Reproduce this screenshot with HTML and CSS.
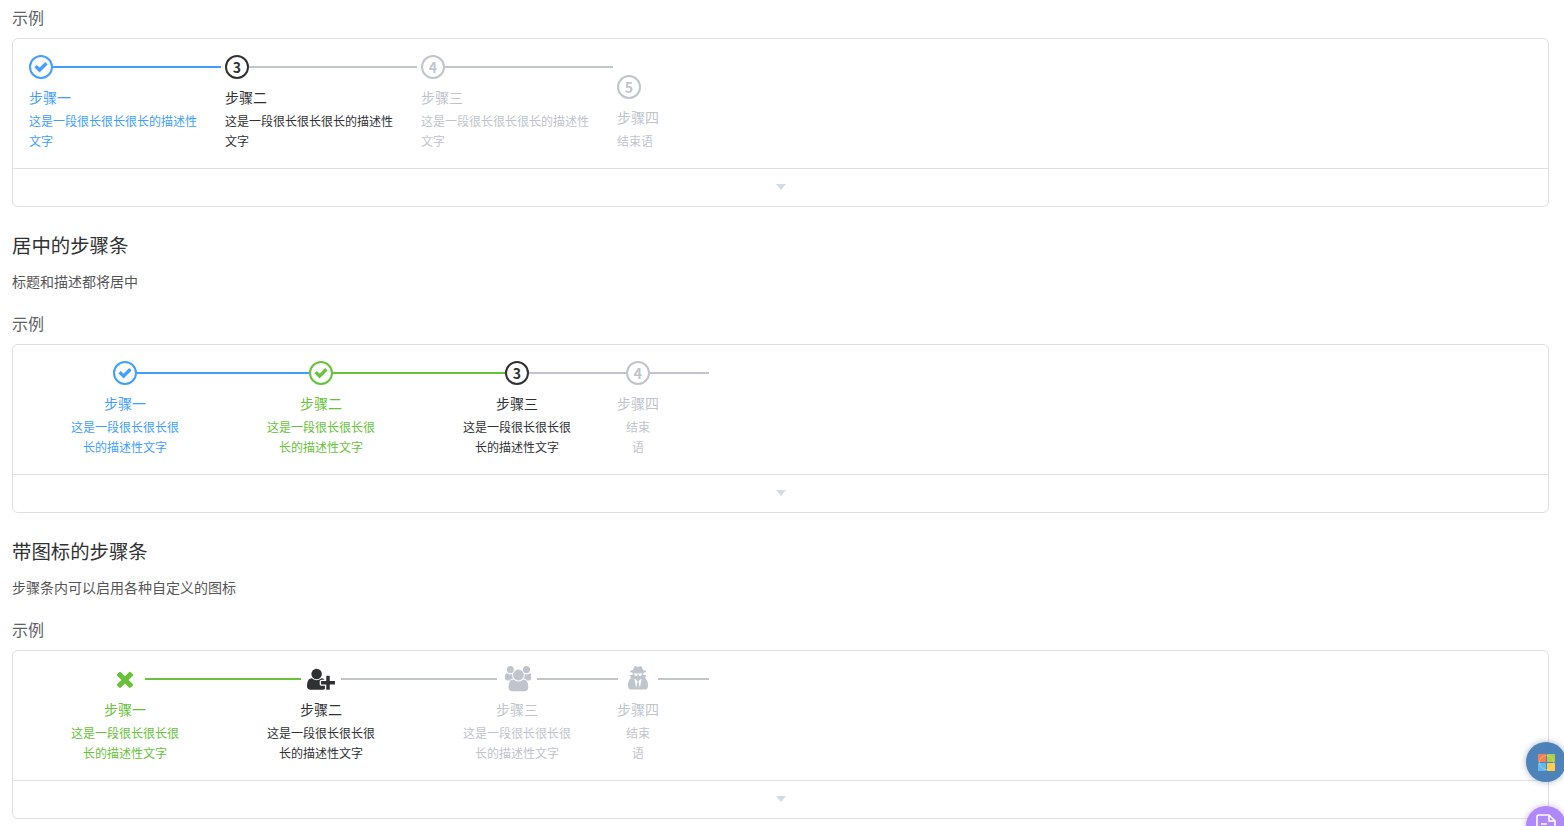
FILE: index.html
```html
<!DOCTYPE html>
<html lang="zh-CN">
<head>
  <meta charset="UTF-8">
  <meta name="viewport" content="width=device-width, initial-scale=1.0">
  <title>Steps 步骤条</title>
  <link rel="stylesheet" href="styles.css">
</head>
<body>
  <svg class="icon-defs" width="0" height="0">
    <symbol id="i-check" viewBox="0 0 1792 1792">
      <path d="M1671 566q0 40-28 68l-724 724-136 136q-28 28-68 28t-68-28l-136-136-362-362q-28-28-28-68t28-68l136-136q28-28 68-28t68 28l294 295 656-657q28-28 68-28t68 28l136 136q28 28 28 68z"/>
    </symbol>
  </svg>

  <h3 class="demo-label demo-label-first">示例</h3>
  <div class="demo-card">
    <div class="demo-body">
      <div class="steps steps-simple">
        <div class="step is-finish">
          <div class="step-head">
            <span class="step-icon"><svg class="check"><use href="#i-check"/></svg></span>
            <span class="step-line"></span>
          </div>
          <div class="step-title">步骤一</div>
          <div class="step-desc">这是一段很长很长很长的描述性文字</div>
        </div>
        <div class="step is-process">
          <div class="step-head">
            <span class="step-icon">3</span>
            <span class="step-line"></span>
          </div>
          <div class="step-title">步骤二</div>
          <div class="step-desc">这是一段很长很长很长的描述性文字</div>
        </div>
        <div class="step is-wait">
          <div class="step-head">
            <span class="step-icon">4</span>
            <span class="step-line"></span>
          </div>
          <div class="step-title">步骤三</div>
          <div class="step-desc">这是一段很长很长很长的描述性文字</div>
        </div>
        <div class="step step-last is-wait">
          <div class="step-head">
            <span class="step-icon">5</span>
          </div>
          <div class="step-title">步骤四</div>
          <div class="step-desc">结束语</div>
        </div>
      </div>
    </div>
    <div class="demo-foot"><span class="caret"></span></div>
  </div>

  <h2 class="section-title">居中的步骤条</h2>
  <p class="section-desc">标题和描述都将居中</p>
  <h3 class="demo-label">示例</h3>
  <div class="demo-card">
    <div class="demo-body">
      <div class="steps steps-center">
        <div class="step is-finish">
          <div class="step-head">
            <span class="step-icon"><svg class="check"><use href="#i-check"/></svg></span>
            <span class="step-line"></span>
          </div>
          <div class="step-title">步骤一</div>
          <div class="step-desc">这是一段很长很长很长的描述性文字</div>
        </div>
        <div class="step is-success">
          <div class="step-head">
            <span class="step-icon"><svg class="check"><use href="#i-check"/></svg></span>
            <span class="step-line"></span>
          </div>
          <div class="step-title">步骤二</div>
          <div class="step-desc">这是一段很长很长很长的描述性文字</div>
        </div>
        <div class="step step-third is-process">
          <div class="step-head">
            <span class="step-icon">3</span>
            <span class="step-line"></span>
          </div>
          <div class="step-title">步骤三</div>
          <div class="step-desc">这是一段很长很长很长的描述性文字</div>
        </div>
        <div class="step step-last is-wait">
          <div class="step-head">
            <span class="step-icon">4</span>
            <span class="step-line"></span>
          </div>
          <div class="step-title">步骤四</div>
          <div class="step-desc">结束语</div>
        </div>
      </div>
    </div>
    <div class="demo-foot"><span class="caret"></span></div>
  </div>

  <h2 class="section-title">带图标的步骤条</h2>
  <p class="section-desc">步骤条内可以启用各种自定义的图标</p>
  <h3 class="demo-label">示例</h3>
  <div class="demo-card">
    <div class="demo-body">
      <div class="steps steps-center steps-icons">
        <div class="step is-success">
          <div class="step-head">
            <span class="step-icon">
              <svg class="icon-close" viewBox="238 238 1316 1316"><path d="M1490 1322q0 40-28 68l-136 136q-28 28-68 28t-68-28l-294-294-294 294q-28 28-68 28t-68-28l-136-136q-28-28-28-68t28-68l294-294-294-294q-28-28-28-68t28-68l136-136q28-28 68-28t68 28l294 294 294-294q28-28 68-28t68 28l136 136q28 28 28 68t-28 68l-294 294 294 294q28 28 28 68z"/></svg>
            </span>
            <span class="step-line"></span>
          </div>
          <div class="step-title">步骤一</div>
          <div class="step-desc">这是一段很长很长很长的描述性文字</div>
        </div>
        <div class="step is-process">
          <div class="step-head">
            <span class="step-icon">
              <svg class="icon-user-plus" viewBox="0 0 2048 1792"><path d="M704 896q-159 0-271.500-112.500t-112.500-271.500 112.500-271.500 271.500-112.500 271.500 112.500 112.500 271.500-112.500 271.500-271.500 112.500zm960 128h352q13 0 22.500 9.500t9.500 22.500v192q0 13-9.500 22.500t-22.500 9.500h-352v352q0 13-9.500 22.500t-22.500 9.500h-192q-13 0-22.500-9.500t-9.500-22.500v-352h-352q-13 0-22.500-9.500t-9.500-22.500v-192q0-13 9.500-22.500t22.500-9.500h352v-352q0-13 9.500-22.500t22.500-9.500h192q13 0 22.500 9.500t9.500 22.500v352zm-736 224q0 52 38 90t90 38h256v238q-68 50-171 50h-874q-121 0-194-70t-73-190q0-53 3.500-103.500t14-109 26.500-108.500 43-97.500 62-81 85.500-53.500 111.500-20q19 0 39 17 79 61 154.500 91.500t164.500 30.500 164.500-30.500 154.500-91.500q20-17 39-17 132 0 217 96h-223q-52 0-90 38t-38 90v192z"/></svg>
            </span>
            <span class="step-line"></span>
          </div>
          <div class="step-title">步骤二</div>
          <div class="step-desc">这是一段很长很长很长的描述性文字</div>
        </div>
        <div class="step step-third is-wait">
          <div class="step-head">
            <span class="step-icon">
              <svg class="icon-users" viewBox="0 0 1920 1792"><path d="M657 896q-162 5-265 128h-134q-82 0-138-40.500t-56-118.500q0-353 124-353 6 0 43.500 21t97.500 42.500 119 21.500q67 0 133-23-5 37-5 66 0 139 81 256zm1071 637q0 120-73 189.500t-194 69.500h-874q-121 0-194-69.500t-73-189.500q0-53 3.500-103.500t14-109 26.500-108.500 43-97.500 62-81 85.500-53.500 111.500-20q10 0 43 21.500t73 48 107 48 135 21.500 135-21.500 107-48 73-48 43-21.500q61 0 111.500 20t85.500 53.500 62 81 43 97.500 26.500 108.500 14 109 3.500 103.500zm-1024-1277q0 106-75 181t-181 75-181-75-75-181 75-181 181-75 181 75 75 181zm704 384q0 159-112.500 271.500t-271.500 112.500-271.500-112.500-112.500-271.500 112.500-271.500 271.500-112.500 271.500 112.500 112.500 271.500zm576 225q0 78-56 118.500t-138 40.500h-134q-103-123-265-128 81-117 81-256 0-29-5-66 66 23 133 23 59 0 119-21.500t97.500-42.500 43.500-21q124 0 124 353zm-128-609q0 106-75 181t-181 75-181-75-75-181 75-181 181-75 181 75 75 181z"/></svg>
            </span>
            <span class="step-line"></span>
          </div>
          <div class="step-title">步骤三</div>
          <div class="step-desc">这是一段很长很长很长的描述性文字</div>
        </div>
        <div class="step step-last is-wait">
          <div class="step-head">
            <span class="step-icon">
              <svg class="icon-secret" viewBox="0 0 1408 1792"><path d="M576 1536l96-448-96-128-128-64zm256 0l128-640-128 64-96 128zm160-1010q-2-4-4-6-10-8-96-8-70 0-167 19-7 2-21 2t-21-2q-97-19-167-19-86 0-96 8-2 2-4 6 2 18 4 27 2 3 7.500 6.500t7.500 10.500q2 4 7.500 20.500t7 20.500 7.500 17 8.500 17 9 14 12 13.500 14 9.500 17.500 8 20.500 4 24.500 2q36 0 59-12.500t32.500-30 14.500-34.500 11.500-29.500 17.500-12.500h12q11 0 17.500 12.500t11.500 29.500 14.500 34.500 32.500 30 59 12.500q13 0 24.500-2t20.500-4 17.500-8 14-9.500 12-13.500 9-14 8.500-17 7.500-17 7-20.500 7.500-20.500q2-7 7.500-10.500t7.500-6.500q2-9 4-27zm416 879q0 121-73 190t-194 69h-874q-121 0-194-69t-73-190q0-61 4.500-118t19-125.500 37.500-123.500 63.500-103.500 93.500-74.500l-90-220h214q-22-64-22-128 0-12 2-32-194-40-194-96 0-57 210-99 17-62 51.500-134t70.500-114q32-37 76-37 30 0 84 31t84 31 84-31 84-31q44 0 76 36 36 42 70.500 114t51.500 134q210 42 210 99 0 56-194 96 7 81-20 160h214l-82 225q63 33 107.500 96.500t65.500 143.500 29 151.500 8 148.500z"/></svg>
            </span>
            <span class="step-line"></span>
          </div>
          <div class="step-title">步骤四</div>
          <div class="step-desc">结束语</div>
        </div>
      </div>
    </div>
    <div class="demo-foot"><span class="caret"></span></div>
  </div>

  <!-- floating buttons -->
  <div class="float-btn float-windows">
    <span class="win-logo">
      <i class="win-red"></i><i class="win-green"></i><i class="win-blue"></i><i class="win-yellow"></i>
    </span>
  </div>
  <div class="float-btn float-doc">
    <svg class="doc-icon" viewBox="0 0 20 24"><path d="M3 1h10l6 6v13a2 2 0 0 1-2 2H3a2 2 0 0 1-2-2V3a2 2 0 0 1 2-2zM13 1v6h6M5 10h6M5 14h9"/></svg>
  </div>
</body>
</html>
```

FILE: styles.css
```css
html, body {
  height: 100%;
}
body {
  font-family: "Noto Sans CJK SC", "Noto Sans", sans-serif;
  margin: 0;
  padding: 0 15px 0 12px;
  background-color: #fff;
  color: #5e6d82;
  overflow: hidden;
}
.icon-defs {
  position: absolute;
}
.demo-label {
  margin: 22px 0 11px;
  font-size: 16px;
  font-weight: 400;
  line-height: 20px;
  color: #606266;
}
.demo-label-first {
  margin-top: 7px;
}
.section-title {
  margin: 24px 0 12px;
  font-size: 19.4px;
  font-weight: 400;
  line-height: 28px;
  color: #303133;
}
.section-desc {
  margin: 0;
  font-size: 14px;
  line-height: 20px;
  color: #555;
}
.demo-card {
  border: 1px solid #e0e0e0;
  border-radius: 6px;
}
.demo-body {
  padding: 16px 16px 17px;
}
.demo-foot {
  box-sizing: border-box;
  height: 38px;
  padding-bottom: 2px;
  border-top: 1px solid #e0e0e0;
  display: flex;
  align-items: center;
  justify-content: center;
}
.caret {
  width: 0;
  height: 0;
  border-left: 5px solid transparent;
  border-right: 5px solid transparent;
  border-top: 6px solid #d3dce6;
}

/* steps */
.steps {
  display: flex;
  align-items: flex-end;
}
.step {
  flex: none;
  width: 196px;
  font-size: 12px;
}
.step-head {
  display: flex;
  align-items: center;
  height: 24px;
}
.step-icon {
  flex: none;
  box-sizing: border-box;
  width: 24px;
  height: 24px;
  border: 2px solid currentColor;
  border-radius: 50%;
  display: flex;
  align-items: center;
  justify-content: center;
  font-size: 14px;
  font-weight: 700;
  line-height: 1;
}
.step-line {
  flex: 1;
  height: 2px;
  background-color: currentColor;
}
.step-title {
  margin-top: 7px;
  font-size: 14px;
  line-height: 22px;
}
.step-desc {
  margin-top: 3px;
  line-height: 20px;
}
.check {
  width: 14px;
  height: 14px;
  fill: currentColor;
  stroke: currentColor;
  stroke-width: 70;
}

.is-finish { color: #409eff; }
.is-success { color: #67c23a; }
.is-process { color: #303133; }
.is-wait { color: #c0c4cc; }
.is-process .step-line { background-color: #c0c4cc; }

.steps-simple .step-line {
  margin-right: 4px;
}
.steps-simple .step-desc {
  width: 172px;
}
.steps-simple .step-last {
  width: auto;
}

.steps-center .step-head {
  padding-left: 84px;
  margin-right: -84px;
}
.steps-center .step-title,
.steps-center .step-desc {
  width: 192px;
  text-align: center;
}
.steps-center .step-desc {
  box-sizing: border-box;
  padding: 0 41px;
}
.steps-center .step-third {
  width: 205px;
}
.steps-center .step-third .step-head {
  margin-right: 0;
}
.steps-center .step-last {
  width: 83px;
}
.steps-center .step-last .step-head {
  padding-left: 0;
  margin-right: 0;
}
.steps-center .step-last .step-title,
.steps-center .step-last .step-desc {
  width: 42px;
  margin-left: -9px;
}
.steps-center .step-last .step-desc {
  padding: 0 6px;
}

/* icon steps use a wider box round the icon */
.steps-icons .step-head {
  padding-left: 76px;
  margin-right: -76px;
}
.steps-icons .step-icon {
  width: 40px;
  border: none;
  border-radius: 0;
}
.steps-icons .step-third {
  width: 197px;
}
.steps-icons .step-last {
  width: 91px;
}
.steps-icons .step-last .step-title,
.steps-icons .step-last .step-desc {
  margin-left: -1px;
}
.step-icon svg {
  flex: none;
  fill: currentColor;
}
.icon-close {
  width: 18px;
  height: 18px;
}
.icon-user-plus {
  width: 28px;
  height: 24.5px;
}
.icon-users {
  width: 27px;
  height: 25.2px;
}
.icon-secret {
  width: 20px;
  height: 25.45px;
}

/* floating buttons */
.float-btn {
  position: fixed;
  left: 1526px;
  width: 40px;
  height: 40px;
  border-radius: 50%;
  display: flex;
  align-items: center;
  justify-content: center;
  box-shadow: 0 0 6px rgba(60, 90, 140, 0.5);
  opacity: 0.92;
}
.float-windows {
  top: 742px;
  background-color: #3f79b5;
}
.float-doc {
  top: 806px;
  background-color: #a97ffb;
  box-shadow: 0 0 6px rgba(150, 110, 240, 0.5);
}
.win-logo {
  position: relative;
  display: grid;
  grid-template-columns: 8px 8px;
  grid-auto-rows: 8px;
  gap: 1px;
}
.win-logo i {
  display: block;
}
.win-logo::after {
  content: "";
  position: absolute;
  left: 1px;
  top: 1px;
  width: 13px;
  height: 13px;
  border: 1px solid rgba(255, 225, 120, 0.45);
  border-radius: 50%;
}
.win-red { background-color: #f2734a; }
.win-green { background-color: #a4cb3e; }
.win-blue { background-color: #52b5f2; }
.win-yellow { background-color: #ffc73a; }
.doc-icon {
  width: 20px;
  height: 24px;
  fill: none;
  stroke: #fff;
  stroke-width: 1.6;
}
```
